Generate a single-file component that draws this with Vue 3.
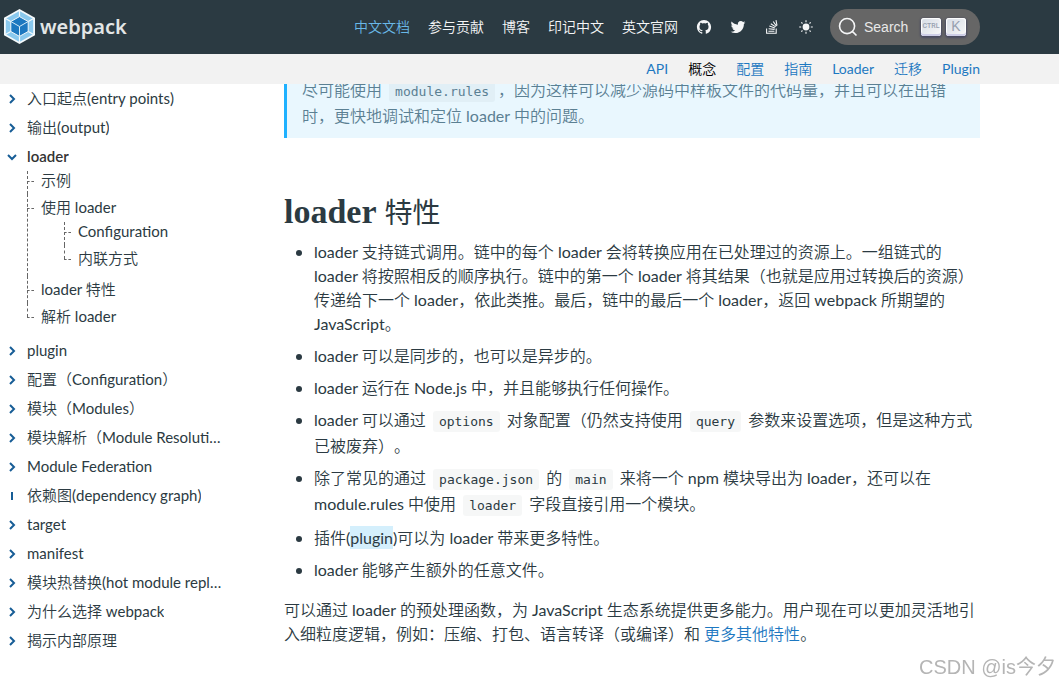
<script setup>
import { ref } from 'vue';

const links = ['中文文档', '参与贡献', '博客', '印记中文', '英文官网'];
const sections = ['API', '概念', '配置', '指南', 'Loader', '迁移', 'Plugin'];
const activeSection = ref('概念');

const pages = ref([
  { title: '入口起点(entry points)' },
  { title: '输出(output)' },
  {
    title: 'loader',
    open: true,
    anchors: [
      { title: '示例' },
      { title: '使用 loader', anchors: [{ title: 'Configuration' }, { title: '内联方式' }] },
      { title: 'loader 特性' },
      { title: '解析 loader' },
    ],
  },
  { title: 'plugin' },
  { title: '配置（Configuration）' },
  { title: '模块（Modules）' },
  { title: '模块解析（Module Resolution）' },
  { title: 'Module Federation' },
  { title: '依赖图(dependency graph)', single: true },
  { title: 'target' },
  { title: 'manifest' },
  { title: '模块热替换(hot module replacement)' },
  { title: '为什么选择 webpack' },
  { title: '揭示内部原理' },
]);

const toggle = (page) => {
  if (page.anchors) page.open = !page.open;
};
</script>

<template>
  <div class="site">
    <header class="header">
      <div class="navbar">
        <a href="#" class="logo">
          <svg width="32" height="36" viewBox="0 0 32 36" aria-hidden="true">
            <path fill="#f4f9fb" d="M15.5 0 31 8.8v17.4L15.5 35 0 26.2V8.8z" />
            <path fill="#8ac9ee" d="M15.5 2 29.2 9.8v15.4L15.5 33 1.8 25.2V9.8z" />
            <path stroke="#f4f9fb" stroke-width="1.2" d="M15.5 1v33M1 9.3l29 16.4M30 9.3 1 25.7" />
            <path fill="#1c78c0" stroke="#f4f9fb" d="m15.5 7.6 8.7 4.9v10l-8.7 4.9-8.7-4.9v-10z" />
            <path fill="none" stroke="#d5ebf7" d="m7 12.6 8.5 4.9 8.5-4.9M15.5 17.5v10" />
          </svg>
          <span>webpack</span>
        </a>
        <nav class="links">
          <a v-for="(link, i) in links" :key="link" href="#" :class="{ active: i === 0 }">{{ link }}</a>
          <a href="#" class="icon" aria-label="GitHub">
            <svg width="16" height="16" viewBox="-1 -1 18 18">
              <path
                d="M8 0C3.58 0 0 3.58 0 8c0 3.54 2.29 6.53 5.47 7.59.4.07.55-.17.55-.38 0-.19-.01-.82-.01-1.49-2.01.37-2.53-.49-2.69-.94-.09-.23-.48-.94-.82-1.13-.28-.15-.68-.52-.01-.53.63-.01 1.08.58 1.23.82.72 1.21 1.87.87 2.33.66.07-.52.28-.87.51-1.07-1.78-.2-3.64-.89-3.64-3.95 0-.87.31-1.59.82-2.15-.08-.2-.36-1.02.08-2.12 0 0 .67-.21 2.2.82.64-.18 1.32-.27 2-.27s1.36.09 2 .27c1.53-1.04 2.2-.82 2.2-.82.44 1.1.16 1.92.08 2.12.51.56.82 1.27.82 2.15 0 3.07-1.87 3.75-3.65 3.95.29.25.54.73.54 1.48 0 1.07-.01 1.93-.01 2.2 0 .21.15.46.55.38A8.01 8.01 0 0 0 16 8c0-4.42-3.58-8-8-8z"
              />
            </svg>
          </a>
          <a href="#" class="icon" aria-label="Twitter">
            <svg width="16" height="16" viewBox="-1 -1 26 26">
              <path
                d="M23.953 4.57a10 10 0 01-2.825.775 4.958 4.958 0 002.163-2.723c-.951.555-2.005.959-3.127 1.184a4.92 4.92 0 00-8.384 4.482C7.69 8.095 4.067 6.13 1.64 3.162a4.822 4.822 0 00-.666 2.475c0 1.71.87 3.213 2.188 4.096a4.904 4.904 0 01-2.228-.616v.06a4.923 4.923 0 003.946 4.827 4.996 4.996 0 01-2.212.085 4.936 4.936 0 004.604 3.417 9.867 9.867 0 01-6.102 2.105c-.39 0-.779-.023-1.17-.067a13.995 13.995 0 007.557 2.209c9.053 0 13.998-7.496 13.998-13.985 0-.21 0-.42-.015-.63A9.935 9.935 0 0024 4.59z"
              />
            </svg>
          </a>
          <a href="#" class="icon" aria-label="Stack Overflow">
            <svg width="16" height="16" viewBox="0 0 16 16" class="stroke">
              <path d="M2.6 9.5v4.7h9.6V9.5M4.4 12.2h6M4.6 9.7l6 .7M5.3 7.1l5.6 1.8M6.8 4.7l4.9 3.2M9.2 2.5l3.3 4.6M12 1.2l1 5.3" />
            </svg>
          </a>
          <button type="button" class="icon" aria-label="Theme">
            <svg width="16" height="16" viewBox="0 0 16 16" class="stroke">
              <circle cx="8" cy="8" r="3.4" class="disc" />
              <path d="M8 1.2v2M8 12.8v2M1.2 8h2M12.8 8h2M3.3 3.3l1.2 1.2M11.5 11.5l1.2 1.2M12.7 3.3l-1.2 1.2M4.5 11.5l-1.2 1.2" />
            </svg>
          </button>
        </nav>
        <button type="button" class="search">
          <svg width="20" height="20" viewBox="0 0 20 20" aria-hidden="true">
            <path
              d="M14.386 14.386l4.088 4.088-4.088-4.088c-2.942 2.942-7.711 2.942-10.653 0s-2.942-7.711 0-10.653 7.711-2.942 10.653 0 2.942 7.711 0 10.653z"
              fill="none"
              stroke="#f5f6f7"
              stroke-width="1.6"
              stroke-linecap="round"
            />
          </svg>
          <span class="search-text">Search</span>
          <kbd class="ctrl">CTRL</kbd>
          <kbd>K</kbd>
        </button>
      </div>
      <nav class="subnav">
        <a
          v-for="section in sections"
          :key="section"
          href="#"
          :class="{ active: section === activeSection }"
          @click.prevent="activeSection = section"
        >{{ section }}</a>
      </nav>
    </header>

    <div class="body">
      <aside class="sidebar">
        <div v-for="page in pages" :key="page.title" class="item">
          <div class="item-row">
            <button type="button" class="toggle" :aria-label="page.title" @click="toggle(page)">
              <svg width="10" height="10" viewBox="0 0 10 10">
                <path v-if="page.single" d="M5 1v8" />
                <path v-else-if="page.open" d="m1 3 4 4 4-4" />
                <path v-else d="m3 1 4 4-4 4" />
              </svg>
            </button>
            <a href="#" class="item-title" :class="{ open: page.open }">{{ page.title }}</a>
          </div>
          <ul v-if="page.open" class="tree">
            <li v-for="anchor in page.anchors" :key="anchor.title">
              <a href="#">{{ anchor.title }}</a>
              <ul v-if="anchor.anchors" class="tree nested">
                <li v-for="sub in anchor.anchors" :key="sub.title">
                  <a href="#">{{ sub.title }}</a>
                </li>
              </ul>
            </li>
          </ul>
        </div>
      </aside>

      <main class="content">
        <blockquote class="tip">
          尽可能使用 <code>module.rules</code>，因为这样可以减少源码中样板文件的代码量，并且可以在出错时，更快地调试和定位 loader 中的问题。
        </blockquote>

        <h2>loader <span>特性</span></h2>
        <ul class="features">
          <li>loader 支持链式调用。链中的每个 loader 会将转换应用在已处理过的资源上。一组链式的 loader 将按照相反的顺序执行。链中的第一个 loader 将其结果（也就是应用过转换后的资源）传递给下一个 loader，依此类推。最后，链中的最后一个 loader，返回 webpack 所期望的 JavaScript。</li>
          <li>loader 可以是同步的，也可以是异步的。</li>
          <li>loader 运行在 Node.js 中，并且能够执行任何操作。</li>
          <li>loader 可以通过 <code>options</code> 对象配置（仍然支持使用 <code>query</code> 参数来设置选项，但是这种方式已被废弃）。</li>
          <li>除了常见的通过 <code>package.json</code> 的 <code>main</code> 来将一个 npm 模块导出为 loader，还可以在 module.rules 中使用 <code>loader</code> 字段直接引用一个模块。</li>
          <li>插件(<mark>plugin</mark>)可以为 loader 带来更多特性。</li>
          <li>loader 能够产生额外的任意文件。</li>
        </ul>
        <p>可以通过 loader 的预处理函数，为 JavaScript 生态系统提供更多能力。用户现在可以更加灵活地引入细粒度逻辑，例如：压缩、打包、语言转译（或编译）和 <a href="#">更多其他特性</a>。</p>
      </main>
    </div>

    <div class="watermark">CSDN @is今夕</div>
  </div>
</template>

<style>
body {
  margin: 0;
  background: #fff;
}
</style>

<style scoped>
.site {
  height: 100vh;
  overflow: hidden;
  color: #2b3a42;
  font-family: Lato, 'Noto Sans CJK SC DemiLight', 'Noto Sans CJK SC', sans-serif;
  font-size: 16px;
  line-height: 24px;
  text-spacing-trim: space-all;
}

a {
  color: inherit;
  text-decoration: none;
}

button {
  padding: 0;
  border: none;
  background: none;
  color: inherit;
  cursor: pointer;
}

ul {
  margin: 0;
  padding: 0;
  list-style: none;
}

.header {
  position: sticky;
  top: 0;
  z-index: 1;
}

.navbar {
  display: flex;
  align-items: center;
  height: 54px;
  padding: 0 79px 0 4px;
  background: #2b3a42;
  color: #f5f6f7;
}

.logo {
  display: flex;
  align-items: center;
  gap: 4px;
  margin-right: auto;
  color: #e3e6e6;
  font-family: 'Noto Sans', sans-serif;
  font-size: 20px;
  font-weight: 600;
}

.links {
  display: flex;
  align-items: center;
  gap: 18px;
  margin-right: 16px;
  font-size: 14px;
}

.links .active {
  color: #69b8e8;
}

.icon,
.toggle svg,
.search svg {
  display: flex;
}

.icon svg {
  fill: #f5f6f7;
}

.icon .stroke {
  fill: none;
  stroke: #f5f6f7;
  stroke-width: 1.1;
}

.icon .disc {
  fill: #f5f6f7;
  stroke: none;
}

.search {
  display: flex;
  align-items: center;
  width: 150px;
  height: 36px;
  padding: 0 14px 0 8px;
  border-radius: 18px;
  background: #666;
  color: #e8e8e8;
  font-family: 'Liberation Sans', sans-serif;
  font-size: 14px;
}

.search-text {
  margin: 0 auto 0 6px;
}

kbd {
  width: 20px;
  height: 18px;
  margin-left: 5px;
  border-radius: 3px;
  background: linear-gradient(-225deg, #d5dbe4, #f8f8f8);
  box-shadow: inset 0 -2px 0 #cdcde6, inset 0 0 1px 1px #fff, 0 1px 2px 1px rgba(30, 35, 90, 0.4);
  color: #969faf;
  font-family: 'Liberation Sans', sans-serif;
  font-size: 14px;
  line-height: 17px;
  text-align: center;
}

.ctrl {
  font-family: Roboto, sans-serif;
  font-size: 7px;
  font-weight: 500;
}

.subnav {
  display: flex;
  align-items: center;
  justify-content: flex-end;
  gap: 20px;
  height: 30px;
  padding-right: 79px;
  background: #f2f2f2;
  color: #1d78c1;
  font-size: 14px;
}

.subnav .active {
  color: #000;
}

.body {
  display: flex;
}

.sidebar {
  flex: none;
  width: 224px;
  padding-top: 4px;
  font-size: 15px;
  line-height: 21px;
}

.item {
  margin-bottom: 8px;
}

.item-row {
  display: flex;
  align-items: center;
}

.toggle {
  flex: none;
  margin: 0 10px 0 7px;
}

.toggle path {
  fill: none;
  stroke: #175d96;
  stroke-width: 2;
}

.item-title {
  overflow: hidden;
  text-overflow: ellipsis;
  white-space: nowrap;
}

.item-title.open {
  color: #333;
  font-weight: 600;
}

.tree {
  margin-left: 27px;
  padding-bottom: 2px;
}

.tree li {
  position: relative;
  padding: 3px 0 3px 14px;
}

.tree a {
  display: block;
}

.nested {
  margin-left: 23px;
  padding-bottom: 1px;
}

/* dashed guide lines of the anchor tree */
.tree li::before,
.tree li::after {
  content: '';
  position: absolute;
  left: 0;
}

.tree li::before {
  top: 0;
  bottom: 0;
  border-left: 1px dashed #666;
}

.tree li:first-child::before {
  top: 4px;
}

.tree li:last-child::before {
  bottom: auto;
  height: 14px;
}

.tree li::after {
  top: 14px;
  width: 7px;
  border-top: 1px dashed #666;
}

.content {
  flex: 1;
  min-width: 0;
  margin-top: -6px;
  padding: 0 79px 0 60px;
}

.tip {
  margin: 0;
  padding: 0 15px 10px;
  border-left: 3px solid #1fb1ff;
  background: #e9f7fe;
  color: #5b8093;
}

h2 {
  margin: 56px 0 8px;
  font-family: 'Liberation Serif', 'Noto Sans CJK SC', serif;
  font-size: 34px;
  line-height: 36px;
}

h2 span {
  font-size: 28px;
  font-weight: 400;
}

.features li {
  position: relative;
  margin-bottom: 8px;
  padding-left: 30px;
}

.features li::before {
  content: '';
  position: absolute;
  top: 10px;
  left: 12px;
  width: 6px;
  height: 6px;
  border-radius: 50%;
  background: #2b3a42;
}

code {
  display: inline-block;
  margin: 0 3px 2px;
  padding: 0 6px;
  border-radius: 3px;
  background: rgba(70, 94, 105, 0.05);
  font-family: 'DejaVu Sans Mono', monospace;
  font-size: 13px;
  line-height: 21px;
}

mark {
  padding: 2px 0;
  background: #d4effc;
  color: inherit;
}

p {
  margin: 16px 0;
}

p a {
  color: #1d78c1;
}

.watermark {
  position: fixed;
  right: 3px;
  bottom: 5px;
  color: #b5b5b5;
  font-family: 'Liberation Sans', 'Noto Sans CJK SC', sans-serif;
  font-size: 20px;
}
</style>
